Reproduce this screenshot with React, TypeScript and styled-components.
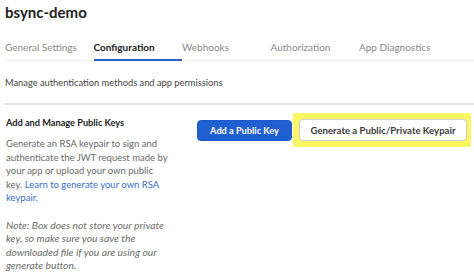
import styled, { createGlobalStyle } from "styled-components";

const GlobalStyle = createGlobalStyle`
  body {
    margin: 0;
    background: #ffffff;
    font-family: Lato, "Liberation Sans", sans-serif;
    color: #222222;
  }
`;

const Page = styled.div`
  width: 474px;
  height: 278px;
  overflow: hidden;
  padding: 0 0 0 5px;
  box-sizing: border-box;
`;

const Title = styled.h1`
  margin: 0;
  padding-top: 1px;
  font-size: 15px;
  font-weight: 700;
  line-height: 22px;
  color: #222222;
`;

const Tabs = styled.nav`
  display: flex;
  border-bottom: 1px solid #ececec;
`;

const Tab = styled.div<{ $active?: boolean }>`
  width: 88.5px;
  flex-shrink: 0;
  font-size: 10px;
  line-height: 14px;
  padding: 17px 0 5px;
  color: ${(p) => (p.$active ? "#222222" : "#8a8a8a")};
  font-weight: ${(p) => (p.$active ? 700 : 400)};
  border-bottom: 2px solid ${(p) => (p.$active ? "#2a62c9" : "transparent")};
  margin-bottom: -1px;
  white-space: nowrap;
`;

const Intro = styled.p`
  margin: 0;
  padding: 14.5px 0;
  font-size: 9.3px;
  line-height: 13px;
  color: #444444;
  border-bottom: 2px solid #e2e2e2;
`;

const Section = styled.div`
  display: flex;
  padding-top: 11px;
`;

const Info = styled.div`
  width: 165px;
  padding-left: 1px;
  box-sizing: border-box;
  flex-shrink: 0;
`;

const SectionTitle = styled.h2`
  margin: 0 0 7px;
  font-size: 9.2px;
  font-weight: 700;
  line-height: 14px;
  color: #222222;
`;

const Body = styled.p<{ $italic?: boolean }>`
  margin: 0 0 13.6px;
  font-size: ${(p) => (p.$italic ? "10.3px" : "9.5px")};
  line-height: 13.6px;
  color: #6a6a6a;
  font-style: ${(p) => (p.$italic ? "italic" : "normal")};
`;

const Link = styled.a`
  color: #3a6fc8;
  text-decoration: none;
`;

const Actions = styled.div`
  display: flex;
  align-items: flex-start;
  gap: 1px;
  margin-left: 27px;
  margin-top: -3px;
`;

const Button = styled.button<{ $primary?: boolean }>`
  height: 22px;
  padding: 0;
  border-radius: 4px;
  font-family: Lato, "Liberation Sans", sans-serif;
  font-size: 9.6px;
  font-weight: 700;
  white-space: nowrap;
  border: 1px solid ${(p) => (p.$primary ? "#1c5bcc" : "#cfcfcf")};
  background: ${(p) => (p.$primary ? "#1f5fd0" : "#ffffff")};
  color: ${(p) => (p.$primary ? "#ffffff" : "#3a3a3a")};
`;

const PrimaryButton = styled(Button)`
  width: 95px;
  height: 21px;
  margin-top: 7px;
  font-size: 9.2px;
`;

const Highlight = styled.div`
  background: #f9f661;
  border-radius: 2px;
  padding: 6px 4px 6px 6px;
`;

const HighlightedButton = styled(Button)`
  width: 168px;
  display: block;
`;

export default function App() {
  return (
    <>
      <GlobalStyle />
      <Page>
        <Title>bsync-demo</Title>
        <Tabs>
          <Tab>General Settings</Tab>
          <Tab $active>Configuration</Tab>
          <Tab>Webhooks</Tab>
          <Tab>Authorization</Tab>
          <Tab>App Diagnostics</Tab>
        </Tabs>
        <Intro>Manage authentication methods and app permissions</Intro>
        <Section>
          <Info>
            <SectionTitle>Add and Manage Public Keys</SectionTitle>
            <Body>
              Generate an RSA keypair to sign and authenticate the JWT request made by your app or
              upload your own public key.{"\u00a0"}
              <Link href="#">Learn to generate your own RSA keypair.</Link>
            </Body>
            <Body $italic>
              Note: Box does not store your private key, so make sure you save the downloaded file
              if you are using our generate button.
            </Body>
          </Info>
          <Actions>
            <PrimaryButton $primary>Add a Public Key</PrimaryButton>
            <Highlight>
              <HighlightedButton>Generate a Public/Private Keypair</HighlightedButton>
            </Highlight>
          </Actions>
        </Section>
      </Page>
    </>
  );
}
